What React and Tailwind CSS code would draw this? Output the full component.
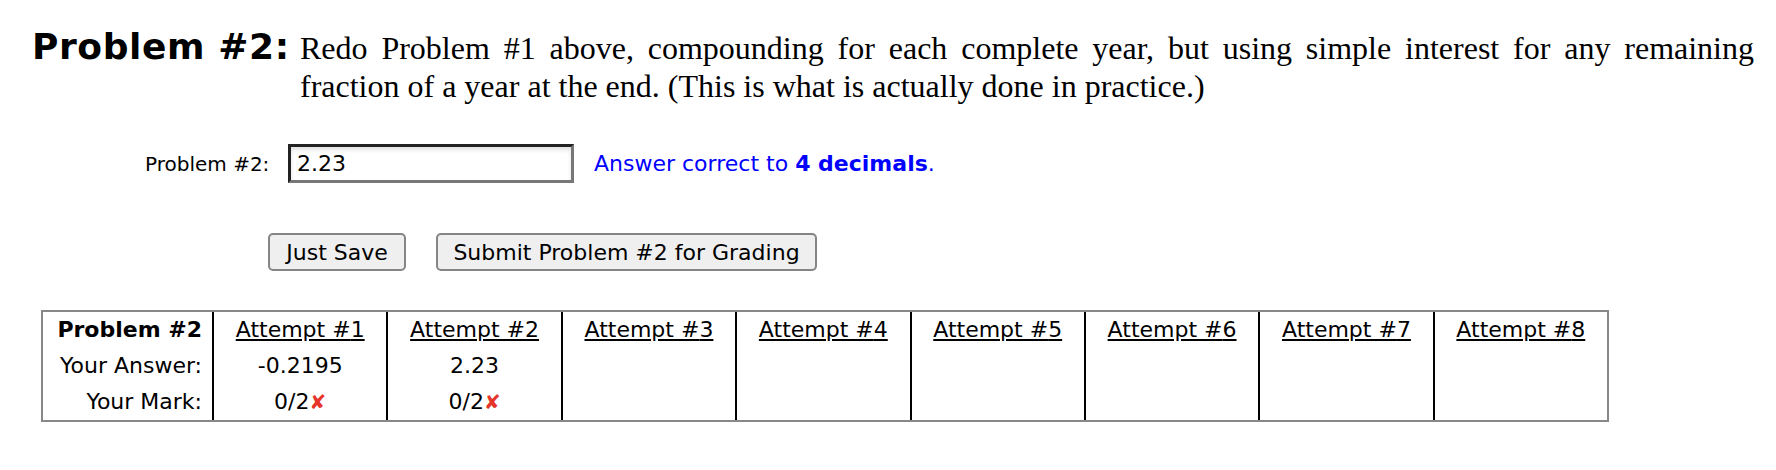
import React from 'react';

const SANS = "font-['DejaVu_Sans','Verdana',sans-serif]";
const SERIF = "font-['Liberation_Serif','Times_New_Roman',serif]";

const ATTEMPTS = [
  { n: 1, answer: '-0.2195', mark: '0/2' },
  { n: 2, answer: '2.23', mark: '0/2' },
  { n: 3 },
  { n: 4 },
  { n: 5 },
  { n: 6 },
  { n: 7 },
  { n: 8 },
];

function Cross() {
  return <span className="text-[20px] leading-none text-[#e5352a]">✘</span>;
}

export default function App() {
  return (
    <div className="w-[1776px] h-[470px] bg-white text-black overflow-hidden">
      {/* Question */}
      <div className="h-[144px] pt-[28px] pl-[32px] flex items-baseline">
        <h2 className={`${SANS} w-[268px] shrink-0 font-bold text-[36px] leading-[38px] tracking-[0.6px]`}>Problem #2:</h2>
        <p className={`${SERIF} w-[1454px] text-[32px] leading-[38px] text-justify`}>
          Redo Problem #1 above, compounding for each complete year, but using simple interest for any remaining
          fraction of a year at the end. (This is what is actually done in practice.)
        </p>
      </div>

      {/* Answer input */}
      <div className={`${SANS} h-[39px] pl-[145px] flex items-center`}>
        <label className="text-[20px] w-[143px] shrink-0">Problem #2:</label>
        <input
          type="text"
          defaultValue="2.23"
          className="w-[286px] h-[39px] pl-[6px] text-[22px] bg-white border-[3px] border-t-[#222] border-l-[#222] border-r-[#777] border-b-[#777] shadow-[inset_0_3px_4px_rgba(0,0,0,0.12)] outline-none"
        />
        <span className="ml-[20px] text-[22px] text-[#0000ff]">
          Answer correct to <b>4 decimals</b>.
        </span>
      </div>

      {/* Buttons */}
      <div className={`${SANS} mt-[50px] pl-[268px] flex gap-[30px]`}>
        <button className="w-[138px] h-[38px] text-[22px] bg-[#efefef] border-2 border-[#858585] rounded-[5px]">
          Just Save
        </button>
        <button className="w-[381px] h-[38px] text-[22px] bg-[#efefef] border-2 border-[#858585] rounded-[5px]">
          Submit Problem #2 for Grading
        </button>
      </div>

      {/* Attempts table */}
      <div
        className={`${SANS} mt-[39px] ml-[41px] w-[1568px] border-2 border-[#888] grid grid-cols-[169px_repeat(8,1fr)] text-[22px] leading-[36px]`}
      >
        <div className="flex flex-col text-right pr-[10px]">
          <div className="h-[36px] font-bold">Problem #2</div>
          <div className="h-[36px]">Your Answer:</div>
          <div className="h-[36px]">Your Mark:</div>
        </div>
        {ATTEMPTS.map((a) => (
          <div key={a.n} className="flex flex-col text-center border-l-2 border-black">
            <div className="h-[36px]">
              <a href="#" className="underline">Attempt #{a.n}</a>
            </div>
            <div className="h-[36px]">{a.answer}</div>
            <div className="h-[36px]">
              {a.mark && (
                <>
                  {a.mark}
                  <Cross />
                </>
              )}
            </div>
          </div>
        ))}
      </div>
    </div>
  );
}
